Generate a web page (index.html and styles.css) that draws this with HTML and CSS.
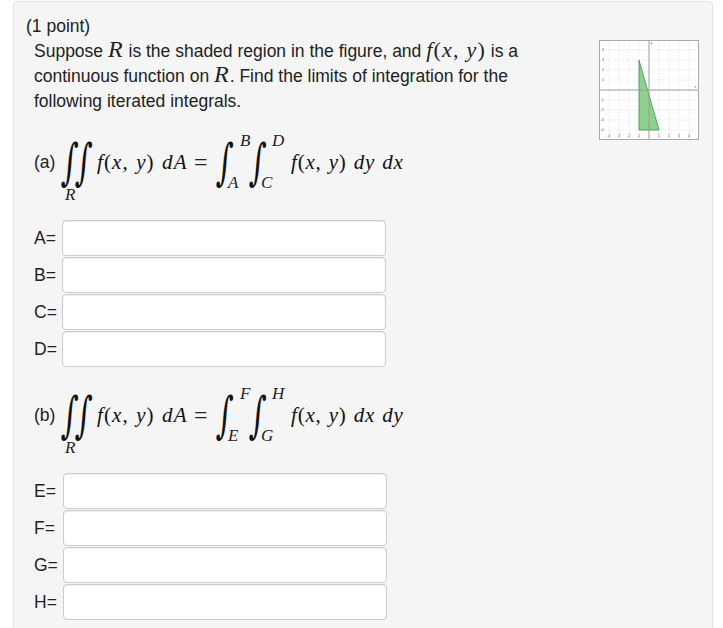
FILE: index.html
```html
<!DOCTYPE html>
<html lang="en">
<head>
<meta charset="utf-8">
<title>Iterated integrals</title>
<link rel="stylesheet" href="styles.css">
</head>
<body>
<main class="well">
  <div class="points">(1 point)</div>
  <div class="body">
    <svg class="figure" width="100" height="100" viewBox="0 0 100 100" xmlns="http://www.w3.org/2000/svg">
      <rect x="0" y="0" width="100" height="100" fill="#fff"/>
      <path class="grid" d="M10 0V100M20 0V100M30 0V100M40 0V100M60 0V100M70 0V100M80 0V100M90 0V100M0 10H100M0 20H100M0 30H100M0 40H100M0 60H100M0 70H100M0 80H100M0 90H100"/>
      <polygon class="region" points="40,20 40,90 60,90"/>
      <path class="axis" d="M50 0V100M0 50H100"/>
      <rect class="frame" x="0.5" y="0.5" width="99" height="99"/>
      <g class="ticks">
        <text x="3" y="11">4</text><text x="3" y="21">3</text><text x="3" y="31">2</text><text x="3" y="41">1</text>
        <text x="1.5" y="61">-1</text><text x="1.5" y="71">-2</text><text x="1.5" y="81">-3</text><text x="1.5" y="91">-4</text>
        <text x="8" y="97">-4</text><text x="18" y="97">-3</text><text x="28" y="97">-2</text><text x="38" y="97">-1</text>
        <text x="59" y="97">1</text><text x="69" y="97">2</text><text x="79" y="97">3</text><text x="89" y="97">4</text>
        <text x="51.5" y="4">y</text><text x="95.5" y="48">x</text>
      </g>
    </svg>
    <p class="intro">Suppose <i class="mathR">R</i> is the shaded region in the figure, and <span class="inline-math"><i>f</i>(<i>x</i>, <i>y</i>)</span> is a continuous function on <i class="mathR">R</i>. Find the limits of integration for the following iterated integrals.</p>

    <div class="formula">
      <span class="part">(a)</span>
      <span class="double"><span class="bigint two"><span>∫</span><span>∫</span></span><i class="under">R</i></span>
      <span class="expr e1"><i>f</i>(<i>x</i>, <i>y</i>) <i>dA</i></span>
      <span class="eq">=</span>
      <span class="int"><span class="bigint"><span>∫</span></span><span class="limits"><i>B</i><i>A</i></span></span>
      <span class="int second"><span class="bigint"><span>∫</span></span><span class="limits"><i>D</i><i>C</i></span></span>
      <span class="expr"><i>f</i>(<i>x</i>, <i>y</i>) <i>dy</i> <i>dx</i></span>
    </div>
    <div class="answers">
      <label class="name" for="a">A=</label><input class="box" id="a" type="text">
      <label class="name" for="b">B=</label><input class="box" id="b" type="text">
      <label class="name" for="c">C=</label><input class="box" id="c" type="text">
      <label class="name" for="d">D=</label><input class="box" id="d" type="text">
    </div>

    <div class="formula">
      <span class="part">(b)</span>
      <span class="double"><span class="bigint two"><span>∫</span><span>∫</span></span><i class="under">R</i></span>
      <span class="expr e1"><i>f</i>(<i>x</i>, <i>y</i>) <i>dA</i></span>
      <span class="eq">=</span>
      <span class="int"><span class="bigint"><span>∫</span></span><span class="limits"><i>F</i><i>E</i></span></span>
      <span class="int second"><span class="bigint"><span>∫</span></span><span class="limits"><i>H</i><i>G</i></span></span>
      <span class="expr"><i>f</i>(<i>x</i>, <i>y</i>) <i>dx</i> <i>dy</i></span>
    </div>
    <div class="answers">
      <label class="name" for="e">E=</label><input class="box" id="e" type="text">
      <label class="name" for="f">F=</label><input class="box" id="f" type="text">
      <label class="name" for="g">G=</label><input class="box" id="g" type="text">
      <label class="name" for="h">H=</label><input class="box" id="h" type="text">
    </div>
  </div>
</main>
</body>
</html>
```

FILE: styles.css
```css
html, body { margin: 0; padding: 0; }
body {
  width: 723px;
  height: 628px;
  overflow: hidden;
  background: #fff;
  color: #222;
  font-family: "Liberation Sans", Arial, sans-serif;
  font-size: 17.5px;
  line-height: 25px;
}
.well {
  box-sizing: border-box;
  width: 700px;
  height: 640px;
  margin: 1px 0 0 13px;
  padding: 12px 12px 0 12px;
  background: #f5f5f5;
  border: 1px solid #e3e3e3;
  border-radius: 4px;
}
.points { height: 25px; }
.body { padding-left: 8px; }
.figure { float: right; margin: 1px 1px 0 0; }
.grid { fill: none; stroke: #e6e6e6; stroke-width: 1; stroke-dasharray: 1.5 1.5; }
.region { fill: #8fd08f; stroke: #3f8f4f; stroke-width: 0.8; }
.axis { fill: none; stroke: #9a9a9a; stroke-width: 1; }
.frame { fill: none; stroke: #aaa; stroke-width: 1; }
.ticks text { font-family: "Liberation Sans", sans-serif; font-size: 3.5px; fill: #555; }
.intro { margin: 0; width: 495px; height: 75px; }
.mathR {
  font-family: "Liberation Serif", serif;
  font-size: 24px;
  line-height: 20px;
  letter-spacing: 1px;
}
.inline-math {
  font-family: "Liberation Serif", serif;
  font-size: 22px;
  line-height: 20px;
  letter-spacing: 1.2px;
}
.formula {
  display: flex;
  align-items: center;
  height: 80px;
  margin-top: 8px;
  width: 480px;
}
.answers + .formula { margin-bottom: 1px; }
.part { width: 28px; flex: none; }
.double {
  position: relative;
  display: block;
  width: 35px;
  height: 50px;
  flex: none;
}
.bigint {
  display: flex;
  width: 11px;
  height: 50px;
  flex: none;
  font-family: "DejaVu Serif", serif;
  font-size: 30px;
  line-height: 50px;
  color: #111;
}
.bigint span {
  display: block;
  flex: none;
  width: 11px;
  transform: scale(1, 1.65) skewX(-6deg);
  transform-origin: 50% 50%;
}
.bigint.two { width: 30px; }
.bigint.two span { width: 14px; }
.under {
  position: absolute;
  left: 3px;
  top: 50px;
  font-family: "Liberation Serif", serif;
  font-size: 17px;
  line-height: 16px;
}
.expr {
  font-family: "Liberation Serif", serif;
  font-size: 21px;
  color: #111;
  white-space: nowrap;
  letter-spacing: 0.8px;
  word-spacing: 1px;
}
.e1 { width: 90px; flex: none; letter-spacing: 1.1px; }
.eq { width: 30px; flex: none; padding-left: 7px; box-sizing: border-box; font-family: "Liberation Serif", serif; font-size: 24px; color: #222; }
.int {
  display: flex;
  align-items: center;
  width: 33px;
  height: 58px;
  flex: none;
}
.int.second { width: 41px; }
.limits {
  display: flex;
  flex-direction: column;
  justify-content: space-between;
  height: 58px;
  font-family: "Liberation Serif", serif;
  font-size: 17px;
  line-height: 16px;
  color: #222;
}
.limits i:first-child { margin-left: 12px; }
.second .limits i:first-child { margin-left: 11px; }
.answers {
  display: grid;
  grid-template-columns: max-content 324px;
  column-gap: 5px;
  row-gap: 1px;
  align-items: center;
  margin-top: 18px;
  width: 360px;
}
.name { display: block; }
.box {
  box-sizing: border-box;
  height: 36px;
  width: 324px;
  margin: 0;
  padding: 0 12px;
  background: #fff;
  border: 1px solid #ccc;
  border-radius: 4px;
  box-shadow: inset 0 1px 1px rgba(0,0,0,.075);
  font: inherit;
}
```
